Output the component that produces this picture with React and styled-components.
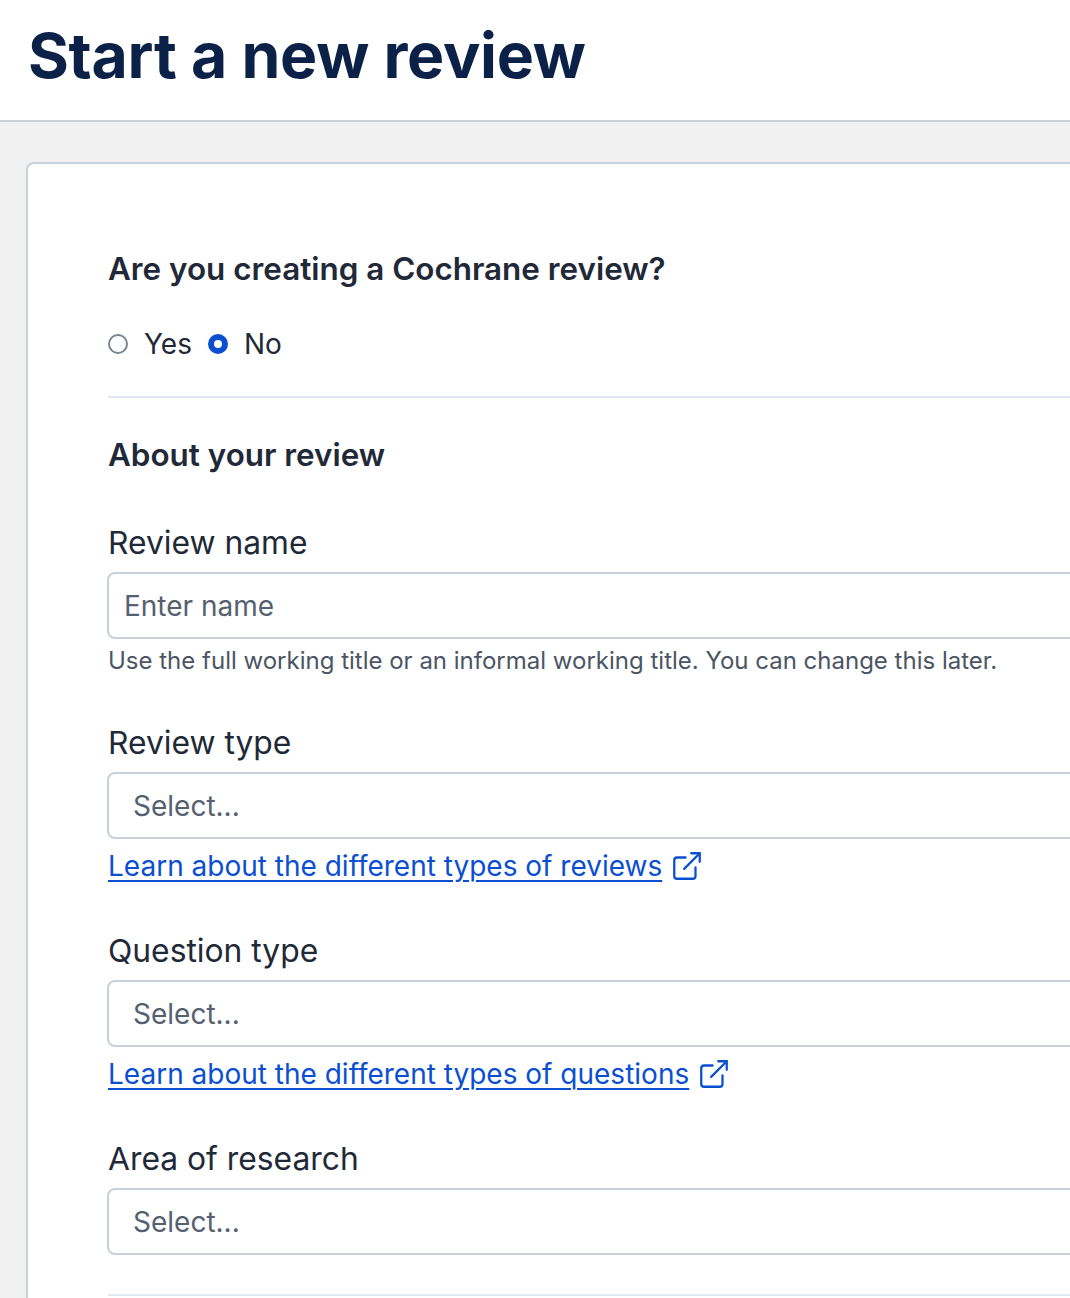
import styled, { createGlobalStyle } from "styled-components";
import { ExternalLink } from "lucide-react";

const COLORS = {
  navy: "#0b2148",
  text: "#1f2937",
  muted: "#4b5563",
  placeholder: "#556070",
  border: "#c8d0da",
  divider: "#e2e8f0",
  page: "#f1f1f1",
  blue: "#0b4fd1",
  white: "#ffffff",
};

const GlobalStyle = createGlobalStyle`
  html, body {
    margin: 0;
    padding: 0;
    overflow: hidden;
    background: ${COLORS.page};
    font-family: Inter, "Noto Sans", "Liberation Sans", sans-serif;
    color: ${COLORS.text};
  }
  * { box-sizing: border-box; }
`;

const Header = styled.header`
  height: 122px;
  background: ${COLORS.white};
  border-bottom: 2px solid ${COLORS.border};
  display: flex;
  align-items: center;
  padding: 0 28px 10px;
`;

const PageTitle = styled.h1`
  margin: 0;
  font-size: 62.5px;
  font-weight: 700;
  letter-spacing: -0.3px;
  color: ${COLORS.navy};
`;

const Main = styled.main`
  padding: 40px 0 0 26px;
  overflow: hidden;
`;

/* the card runs on past the right edge of the window, as in the screenshot */
const Card = styled.div`
  width: calc(100vw + 40px);
  min-height: 1200px;
  background: ${COLORS.white};
  border: 2px solid ${COLORS.border};
  border-radius: 8px;
  padding: 87px 0 0 80px;
`;

const SectionTitle = styled.h2`
  margin: 0;
  font-size: 31.4px;
  line-height: 36px;
  font-weight: 600;
  color: ${COLORS.text};
`;

const RadioRow = styled.div`
  display: flex;
  align-items: center;
  margin-top: 39px;
  height: 36px;
`;

const RadioLabel = styled.label`
  display: flex;
  align-items: center;
  gap: 16px;
  margin-right: 16px;
  font-size: 28px;
  color: ${COLORS.text};
`;

const RadioDot = styled.span`
  width: 20px;
  height: 20px;
  border-radius: 50%;
  border: ${(p) => (p.$checked ? `6px solid ${COLORS.blue}` : "2px solid #7b8494")};
  background: ${COLORS.white};
`;

const Divider = styled.hr`
  margin: ${(p) => p.$top}px 0 0;
  border: none;
  border-top: 2px solid ${COLORS.divider};
`;

const Spaced = styled.div`
  margin-top: ${(p) => p.$top}px;
`;

const FieldLabel = styled.label`
  display: block;
  font-size: 31.8px;
  line-height: 36px;
  color: ${COLORS.text};
  margin-bottom: 11px;
`;

const Box = styled.div`
  height: 67px;
  margin-left: -1px;
  border: 2px solid ${COLORS.border};
  border-radius: 8px;
  display: flex;
  align-items: center;
  padding-left: ${(p) => (p.$select ? 24 : 15)}px;
  font-size: 28px;
  color: ${COLORS.placeholder};
`;

const Help = styled.div`
  margin-top: 7px;
  font-size: 24px;
  line-height: 30px;
  color: ${COLORS.muted};
`;

const LinkRow = styled.a`
  margin-top: 10px;
  display: inline-flex;
  align-items: center;
  gap: 8px;
  font-size: 28px;
  line-height: 34px;
  color: ${COLORS.blue};
  text-decoration: underline;
  text-underline-offset: 4px;
  text-decoration-thickness: 2px;
`;

const Field = ({ label, top, children }) => (
  <Spaced $top={top}>
    <FieldLabel>{label}</FieldLabel>
    {children}
  </Spaced>
);

const Link = ({ children }) => (
  <div>
    <LinkRow href="#">
      {children}
      <ExternalLink size={34} strokeWidth={1.6} />
    </LinkRow>
  </div>
);

const App = () => {
  return (
    <>
      <GlobalStyle />
      <Header>
        <PageTitle>Start a new review</PageTitle>
      </Header>
      <Main>
        <Card>
          <SectionTitle>Are you creating a Cochrane review?</SectionTitle>
          <RadioRow>
            <RadioLabel>
              <RadioDot />
              Yes
            </RadioLabel>
            <RadioLabel>
              <RadioDot $checked />
              No
            </RadioLabel>
          </RadioRow>
          <Divider $top={34} />

          <Spaced $top={39}>
            <SectionTitle>About your review</SectionTitle>
          </Spaced>

          <Field label="Review name" top={52}>
            <Box>Enter name</Box>
            <Help>
              Use the full working title or an informal working title. You can
              change this later.
            </Help>
          </Field>

          <Field label="Review type" top={49}>
            <Box $select>Select...</Box>
            <Link>Learn about the different types of reviews</Link>
          </Field>

          <Field label="Question type" top={50}>
            <Box $select>Select...</Box>
            <Link>Learn about the different types of questions</Link>
          </Field>

          <Field label="Area of research" top={50}>
            <Box $select>Select...</Box>
          </Field>

          <Divider $top={39} />
        </Card>
      </Main>
    </>
  );
};

export default App;
